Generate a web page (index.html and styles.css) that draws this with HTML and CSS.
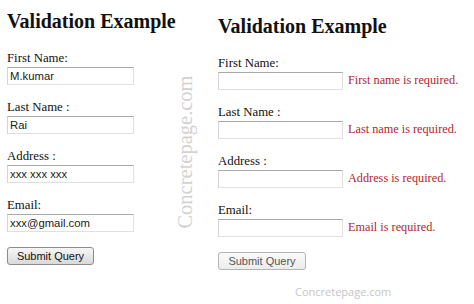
FILE: index.html
```html
<!DOCTYPE html>
<html>
<head>
<meta charset="utf-8">
<link rel="stylesheet" href="styles.css">
</head>
<body>
<div class="page">
  <section class="panel panel-left">
    <h1 class="title">Validation Example</h1>
    <div class="group">
      <div class="label">First Name:</div>
      <div class="row"><input class="field" type="text" value="M.kumar"></div>
    </div>
    <div class="group">
      <div class="label">Last Name :</div>
      <div class="row"><input class="field" type="text" value="Rai"></div>
    </div>
    <div class="group">
      <div class="label">Address :</div>
      <div class="row"><input class="field" type="text" value="xxx xxx xxx"></div>
    </div>
    <div class="group">
      <div class="label">Email:</div>
      <div class="row"><input class="field" type="text" value="xxx@gmail.com"></div>
    </div>
    <button class="btn" type="button">Submit Query</button>
    <div class="mark-vertical">Concretepage.com</div>
  </section>
  <section class="panel panel-right">
    <h1 class="title">Validation Example</h1>
    <div class="group">
      <div class="label">First Name:</div>
      <div class="row"><input class="field field-right" type="text"><span class="error">First name is required.</span></div>
    </div>
    <div class="group">
      <div class="label">Last Name :</div>
      <div class="row"><input class="field field-right" type="text"><span class="error">Last name is required.</span></div>
    </div>
    <div class="group">
      <div class="label">Address :</div>
      <div class="row"><input class="field field-right" type="text"><span class="error">Address is required.</span></div>
    </div>
    <div class="group">
      <div class="label">Email:</div>
      <div class="row"><input class="field field-right" type="text"><span class="error">Email is required.</span></div>
    </div>
    <button class="btn btn-disabled" type="button">Submit Query</button>
    <div class="mark-bottom">Concretepage.com</div>
  </section>
</div>
</body>
</html>
```

FILE: styles.css
```css
html, body {
  margin: 0;
  padding: 0;
  background: #ffffff;
}
body {
  width: 474px;
  height: 304px;
  overflow: hidden;
  font-family: "Liberation Serif", "Times New Roman", serif;
  color: #111;
}
.page {
  display: flex;
  height: 304px;
}
.panel {
  position: relative;
  display: flex;
  flex-direction: column;
  align-items: flex-start;
  padding-left: 7px;
  box-sizing: border-box;
}
.panel-left {
  width: 211px;
  padding-top: 9px;
}
.panel-right {
  flex: 1;
  padding-top: 14px;
}
.title {
  margin: 0 0 18px 0;
  font-size: 20px;
  line-height: 24px;
  font-weight: bold;
  color: #111;
  white-space: nowrap;
}
.group {
  margin-bottom: 15px;
}
.label {
  font-size: 12.8px;
  line-height: 15px;
  margin-bottom: 1px;
  color: #111;
  white-space: nowrap;
}
.row {
  display: flex;
  align-items: center;
}
.field {
  box-sizing: border-box;
  width: 127px;
  height: 18px;
  margin: 0;
  padding: 0 2px;
  border: 1px solid #e0e0e0;
  border-top-color: #a8a8a8;
  border-left-color: #d4d4d4;
  background: #fff;
  font-family: "Liberation Sans", Arial, sans-serif;
  font-size: 11.3px;
  color: #1a1a1a;
  outline: none;
}
.field-right {
  width: 125px;
}
.error {
  margin-left: 5px;
  margin-top: -2px;
  font-size: 12.25px;
  line-height: 15px;
  color: #b3262c;
  white-space: nowrap;
}
.btn {
  box-sizing: border-box;
  width: 87px;
  height: 18px;
  margin: 0;
  padding: 0;
  border: 1px solid #8c8c8c;
  border-radius: 3px;
  background: linear-gradient(#f6f6f6, #d9d9d9);
  font-family: "Liberation Sans", Arial, sans-serif;
  font-size: 11px;
  line-height: 16px;
  color: #111;
}
.btn-disabled {
  width: 88px;
  border-color: #b4b4b4;
  background: linear-gradient(#fafafa, #ececec);
  color: #555;
}
.mark-vertical {
  position: absolute;
  left: 105px;
  top: 141px;
  width: 160px;
  text-align: center;
  transform: rotate(-90deg);
  font-size: 20.5px;
  line-height: 22px;
  color: #d2d2d2;
  white-space: nowrap;
}
.mark-bottom {
  position: absolute;
  left: 84px;
  top: 284px;
  font-family: "Open Sans", "Liberation Sans", sans-serif;
  font-size: 11px;
  line-height: 15px;
  color: #c6c6c6;
  white-space: nowrap;
}
```
